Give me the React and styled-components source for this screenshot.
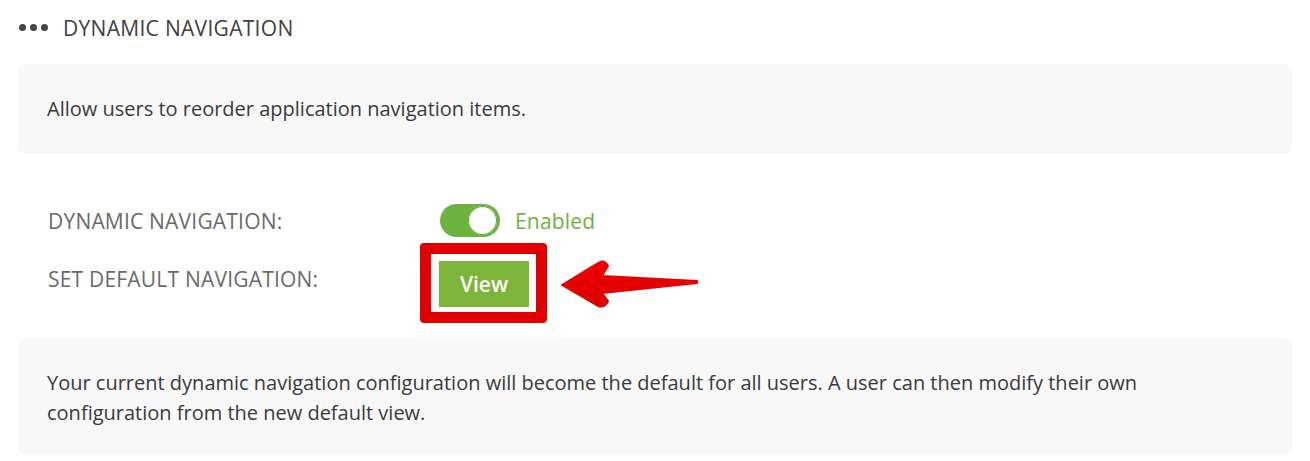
import React, { useState } from 'react';
import styled, { createGlobalStyle } from 'styled-components';

const GlobalStyle = createGlobalStyle`
  body {
    margin: 0;
    background: #ffffff;
    font-family: "Open Sans", "Liberation Sans", sans-serif;
  }
`;

const Page = styled.div`
  padding: 0 18px;
`;

const Header = styled.div`
  display: flex;
  align-items: center;
  height: 55px;
  padding-left: 1px;
`;

const Dots = styled.div`
  display: flex;
  gap: 4px;
  margin-right: 15px;
  span {
    width: 7px;
    height: 7px;
    border-radius: 50%;
    background: #454545;
  }
`;

const Title = styled.h2`
  margin: 0;
  font-size: 21px;
  font-weight: 400;
  color: #404040;
  letter-spacing: 0.3px;
`;

const InfoBox = styled.div`
  margin-top: ${(p) => p.$top || 0}px;
  background: #f8f8f8;
  border-radius: 8px;
  padding: ${(p) => p.$pad || '30px 29px'};
  font-size: 20px;
  line-height: 30px;
  color: #3a3a3a;
`;

const Settings = styled.div`
  display: flex;
  flex-direction: column;
  gap: 6px;
  padding: 50px 0 15px 30px;
`;

const Row = styled.div`
  display: flex;
  align-items: center;
`;

const Label = styled.div`
  width: 392px;
  padding-bottom: ${(p) => p.$lift || 0}px;
  font-size: 21px;
  color: #6a6a6a;
  letter-spacing: 0.2px;
`;

const Toggle = styled.button`
  position: relative;
  width: 60px;
  height: 33px;
  border: none;
  border-radius: 17px;
  background: ${(p) => (p.$on ? '#6db33f' : '#c8c8c8')};
  padding: 0;
  cursor: pointer;
  &::after {
    content: '';
    position: absolute;
    top: 2px;
    left: ${(p) => (p.$on ? '28px' : '2px')};
    width: 29px;
    height: 29px;
    border-radius: 50%;
    background: #ffffff;
    box-shadow: inset 0 0 0 1px #5fa534;
  }
`;

const Status = styled.span`
  margin-left: 15px;
  font-size: 21px;
  color: #6db33f;
  letter-spacing: 0.2px;
`;

const Highlight = styled.div`
  margin-left: -20px;
  border: 11px solid #e10000;
  border-radius: 4px;
  padding: 7px 7px 5px 8px;
  background: #ffffff;
`;

const ViewButton = styled.button`
  display: block;
  width: 90px;
  height: 46px;
  border: none;
  background: #7cb53a;
  color: #ffffff;
  font-family: inherit;
  font-size: 21px;
  font-weight: 600;
  cursor: pointer;
`;

const Arrow = styled.svg`
  margin-left: 13px;
  display: block;
`;

export default function App() {
  const [enabled, setEnabled] = useState(true);

  return (
    <Page>
      <GlobalStyle />
      <Header>
        <Dots>
          <span />
          <span />
          <span />
        </Dots>
        <Title>DYNAMIC NAVIGATION</Title>
      </Header>

      <InfoBox $top={9}>Allow users to reorder application navigation items.</InfoBox>

      <Settings>
        <Row>
          <Label>DYNAMIC NAVIGATION:</Label>
          <Toggle $on={enabled} onClick={() => setEnabled(!enabled)} aria-label="toggle" />
          <Status>{enabled ? 'Enabled' : 'Disabled'}</Status>
        </Row>
        <Row>
          <Label $lift={8}>SET DEFAULT NAVIGATION:</Label>
          <Highlight>
            <ViewButton>View</ViewButton>
          </Highlight>
          <Arrow width="140" height="50" viewBox="0 0 140 50">
            <defs>
              <linearGradient id="arrowFill" x1="0" y1="0" x2="0" y2="1">
                <stop offset="0" stopColor="#ee0000" />
                <stop offset="1" stopColor="#d80000" />
              </linearGradient>
            </defs>
            <path
              d="M2 27 L38 5 Q45 1 48 8 L42 18 L137 23 L137 25 L42 35 L48 43 Q45 50 38 48 Z"
              fill="url(#arrowFill)"
              stroke="url(#arrowFill)"
              strokeWidth="2"
              strokeLinejoin="round"
            />
          </Arrow>
        </Row>
      </Settings>

      <InfoBox $pad="30px 29px 27px">
        Your current dynamic navigation configuration will become the default for all users. A user can then modify their own
        configuration from the new default view.
      </InfoBox>
    </Page>
  );
}
